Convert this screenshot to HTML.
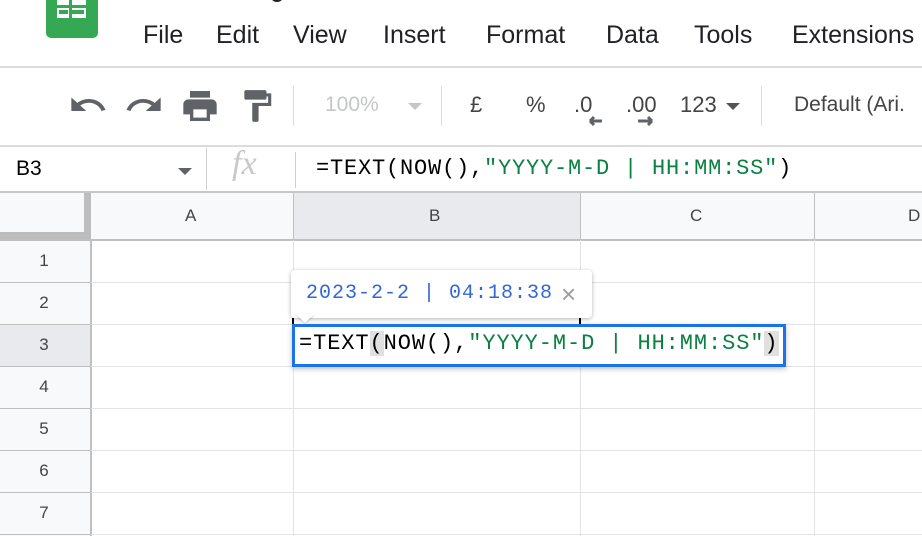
<!DOCTYPE html>
<html><head><meta charset="utf-8"><style>
*{margin:0;padding:0;box-sizing:border-box}
body{width:922px;height:536px;overflow:hidden;background:#fff;font-family:"Liberation Sans",Roboto,sans-serif;position:relative;color:#202124}
.a{position:absolute}
.menu{top:21px;font-size:25px;color:#202124}
.vl{position:absolute;width:1px;background:#dadce0}
.hl{position:absolute;height:1px;background:#e2e3e3}
.mono{font-family:"Liberation Mono",monospace}
</style></head><body>
<div class="a" style="left:46px;top:-10px;width:52px;height:48px;background:#34a853;border-radius:0 0 5px 5px"></div>
<div class="a" style="left:57px;top:0;width:29px;height:18px;background:#fff"></div>
<div class="a" style="left:57px;top:5px;width:29px;height:3px;background:#34a853"></div>
<div class="a" style="left:59px;top:10px;width:9px;height:4px;background:#34a853"></div>
<div class="a" style="left:72px;top:10px;width:12px;height:4px;background:#34a853"></div>
<div class="a" style="left:69px;top:0;width:3px;height:18px;background:#34a853"></div>
<div class="a" style="left:270px;top:-12px;width:14px;height:14px;border-radius:50%;background:#202124"></div>
<div class="a menu" style="left:143px">File</div>
<div class="a menu" style="left:216px">Edit</div>
<div class="a menu" style="left:293px">View</div>
<div class="a menu" style="left:383px">Insert</div>
<div class="a menu" style="left:486px">Format</div>
<div class="a menu" style="left:606px">Data</div>
<div class="a menu" style="left:694px">Tools</div>
<div class="a menu" style="left:792px">Extensions</div>
<div class="a" style="left:0;top:66px;width:922px;height:2px;background:#dadce0"></div>
<svg class="a" style="left:68px;top:87px" width="40" height="36" viewBox="0 0 24 24" preserveAspectRatio="none"><path fill="#5f6368" d="M12.5 8c-2.65 0-5.05.99-6.9 2.6L2 7v9h9l-3.62-3.62c1.39-1.16 3.16-1.88 5.12-1.88 3.54 0 6.55 2.310 7.6 5.5l2.37-.78C21.08 11.03 17.15 8 12.5 8z"/></svg>
<svg class="a" style="left:124px;top:87px;transform:scaleX(-1)" width="40" height="36" viewBox="0 0 24 24" preserveAspectRatio="none"><path fill="#5f6368" d="M12.5 8c-2.65 0-5.05.99-6.9 2.6L2 7v9h9l-3.62-3.62c1.39-1.16 3.16-1.88 5.12-1.88 3.54 0 6.55 2.31 7.6 5.5l2.37-.78C21.08 11.03 17.15 8 12.5 8z"/></svg>
<svg class="a" style="left:180px;top:86px" width="40" height="40" viewBox="0 0 24 24"><path fill="#5f6368" d="M19 8H5c-1.66 0-3 1.34-3 3v6h4v4h12v-4h4v-6c0-1.66-1.34-3-3-3zm-3 11H8v-5h8v5zm-1-16H6v4h12V3z"/></svg>
<svg class="a" style="left:238px;top:86px" width="38" height="40" viewBox="0 0 24 24"><path fill="#5f6368" d="M18 4V3c0-.55-.45-1-1-1H5c-.55 0-1 .45-1 1v4c0 .55.45 1 1 1h12c.55 0 1-.45 1-1V6h1v4H9v11c0 .55.45 1 1 1h2c.55 0 1-.45 1-1v-9h8V4h-3z"/></svg>
<div class="vl" style="left:293px;top:86px;height:40px"></div>
<div class="a" style="left:325px;top:93px;font-size:21px;color:#c4c7c5">100%</div>
<div class="a" style="left:408px;top:103px;border:7px solid transparent;border-top:7px solid #c4c7c5;border-bottom:0"></div>
<div class="vl" style="left:441px;top:86px;height:40px"></div>
<div class="a" style="left:470px;top:92px;font-size:22px;color:#444">£</div>
<div class="a" style="left:526px;top:92px;font-size:22px;color:#444">%</div>
<div class="a" style="left:574px;top:92px;font-size:22px;color:#444">.0</div>
<div class="a" style="left:626px;top:92px;font-size:22px;color:#444">.00</div>
<svg class="a" style="left:588px;top:115px" width="80" height="14"><path d="M2 6h12M2 6l4-4M2 6l4 4" stroke="#5f6368" stroke-width="3" fill="none"/><path d="M50 6h14M64 6l-4-4M64 6l-4 4" stroke="#5f6368" stroke-width="3" fill="none"/></svg>
<div class="a" style="left:680px;top:92px;font-size:22px;color:#444">123</div>
<div class="a" style="left:726px;top:103px;border:7px solid transparent;border-top:7px solid #555;border-bottom:0"></div>
<div class="vl" style="left:761px;top:86px;height:40px"></div>
<div class="a" style="left:794px;top:93px;font-size:21px;color:#444">Default (Ari.</div>
<div class="a" style="left:0;top:145px;width:922px;height:2px;background:#dadce0"></div>
<div class="a" style="left:16px;top:157px;font-size:21px;color:#000">B3</div>
<div class="a" style="left:178px;top:168px;border:7px solid transparent;border-top:7px solid #5f6368;border-bottom:0"></div>
<div class="vl" style="left:206px;top:148px;height:42px;background:#d0d0d0"></div>
<div class="a" style="left:232px;top:145px;font-size:34px;font-style:italic;font-family:'Liberation Serif',serif;color:#c8c8c8">fx</div>
<div class="vl" style="left:295px;top:152px;height:36px;background:#d0d0d0"></div>
<div class="a mono" style="left:316px;top:156px;font-size:22px;color:#000;letter-spacing:0.8px;white-space:nowrap">=TEXT(NOW(),<span style="color:#0b8043">"YYYY-M-D | HH:MM:SS"</span>)</div>
<div class="a" style="left:0;top:191px;width:922px;height:2px;background:#c7c7c7"></div>
<div class="a" style="left:0;top:193px;width:922px;height:47px;background:#f8f9fa"></div>
<div class="a" style="left:293px;top:193px;width:287px;height:47px;background:#e8eaed"></div>
<div class="a" style="left:0;top:240px;width:91px;height:296px;background:#f8f9fa"></div>
<div class="a" style="left:0;top:324px;width:91px;height:42px;background:#e8eaed"></div>
<div class="a" style="left:84px;top:193px;width:7px;height:47px;background:#bdbdbd"></div>
<div class="a" style="left:0;top:232px;width:91px;height:8px;background:#bdbdbd"></div>
<div class="a" style="left:0;top:239px;width:922px;height:2px;background:#c0c0c0"></div>
<div class="a" style="left:90px;top:240px;width:2px;height:296px;background:#c0c0c0"></div>
<div class="vl" style="left:293px;top:193px;height:343px;background:#e2e3e3"></div>
<div class="vl" style="left:580px;top:193px;height:343px;background:#e2e3e3"></div>
<div class="vl" style="left:814px;top:193px;height:343px;background:#e2e3e3"></div>
<div class="vl" style="left:293px;top:193px;height:47px;background:#c0c0c0"></div>
<div class="vl" style="left:580px;top:193px;height:47px;background:#c0c0c0"></div>
<div class="vl" style="left:814px;top:193px;height:47px;background:#c0c0c0"></div>
<div class="hl" style="left:0;top:282px;width:922px"></div>
<div class="hl" style="left:0;top:324px;width:922px"></div>
<div class="hl" style="left:0;top:366px;width:922px"></div>
<div class="hl" style="left:0;top:408px;width:922px"></div>
<div class="hl" style="left:0;top:450px;width:922px"></div>
<div class="hl" style="left:0;top:492px;width:922px"></div>
<div class="hl" style="left:0;top:534px;width:922px"></div>
<div class="a" style="left:0;top:282px;width:91px;height:1px;background:#c0c0c0"></div>
<div class="a" style="left:0;top:324px;width:91px;height:1px;background:#c0c0c0"></div>
<div class="a" style="left:0;top:366px;width:91px;height:1px;background:#c0c0c0"></div>
<div class="a" style="left:0;top:408px;width:91px;height:1px;background:#c0c0c0"></div>
<div class="a" style="left:0;top:450px;width:91px;height:1px;background:#c0c0c0"></div>
<div class="a" style="left:0;top:492px;width:91px;height:1px;background:#c0c0c0"></div>
<div class="a" style="left:0;top:534px;width:91px;height:1px;background:#c0c0c0"></div>
<div class="a" style="left:185px;top:206px;font-size:17px;color:#444">A</div>
<div class="a" style="left:429px;top:206px;font-size:17px;color:#444">B</div>
<div class="a" style="left:690px;top:206px;font-size:17px;color:#444">C</div>
<div class="a" style="left:908px;top:206px;font-size:17px;color:#444">D</div>
<div class="a" style="left:0;top:251px;width:88px;text-align:center;font-size:17px;color:#444">1</div>
<div class="a" style="left:0;top:293px;width:88px;text-align:center;font-size:17px;color:#444">2</div>
<div class="a" style="left:0;top:335px;width:88px;text-align:center;font-size:17px;color:#444">3</div>
<div class="a" style="left:0;top:377px;width:88px;text-align:center;font-size:17px;color:#444">4</div>
<div class="a" style="left:0;top:419px;width:88px;text-align:center;font-size:17px;color:#444">5</div>
<div class="a" style="left:0;top:461px;width:88px;text-align:center;font-size:17px;color:#444">6</div>
<div class="a" style="left:0;top:503px;width:88px;text-align:center;font-size:17px;color:#444">7</div>
<div class="a" style="left:292px;top:318px;width:289px;height:8px;border-left:2px solid #000;border-right:2px solid #000"></div>
<div class="a" style="left:292px;top:324px;width:494px;height:43px;border:3px solid #1a73e8;background:#fff;box-shadow:0 2px 5px rgba(0,0,0,.25)"></div>
<div class="a mono" style="left:299px;top:331px;font-size:22px;color:#000;letter-spacing:0.9px;white-space:nowrap">=TEXT<span style="background:#e0e0e0">(</span>NOW(),<span style="color:#0b8043">"YYYY-M-D | HH:MM:SS"</span><span style="background:#e0e0e0">)</span></div>
<div class="a" style="left:291px;top:270px;width:301px;height:48px;background:#fff;border-radius:4px;box-shadow:0 1px 4px rgba(0,0,0,.3)"></div>
<div class="a" style="left:296px;top:314px;width:0;height:0;border-left:9px solid transparent;border-right:9px solid transparent;border-top:9px solid #fff;filter:drop-shadow(0 1px 1px rgba(0,0,0,.2))"></div>
<div class="a mono" style="left:306px;top:282px;font-size:20px;color:#3367d6;letter-spacing:1px;white-space:nowrap">2023-2-2 | 04:18:38</div>
<div class="a" style="left:561px;top:279px;font-size:26px;color:#9e9e9e">×</div>
</body></html>
